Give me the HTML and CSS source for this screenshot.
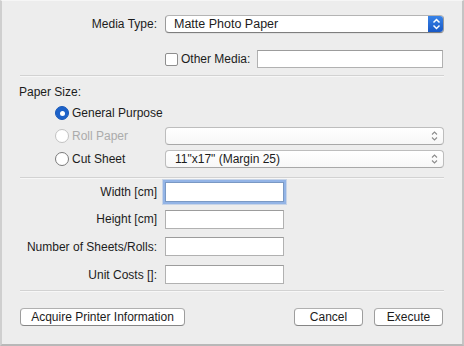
FILE: index.html
```html
<!DOCTYPE html>
<html>
<head>
<meta charset="utf-8">
<link rel="stylesheet" href="styles.css">
</head>
<body>
<div class="window">
  <div class="row media-row">
    <div class="label">Media Type:</div>
    <div class="popup primary">
      <span class="popup-text">Matte Photo Paper</span>
      <span class="stepper blue">
        <svg width="9" height="12" viewBox="0 0 9 12"><path d="M1.5 4.5 L4.5 1.5 L7.5 4.5 M1.5 7.5 L4.5 10.5 L7.5 7.5" fill="none" stroke="#fff" stroke-width="1.5"/></svg>
      </span>
    </div>
  </div>
  <div class="row other-row">
    <div class="label"></div>
    <label class="check"><span class="box"></span>Other Media:</label>
    <div class="field other-field"></div>
  </div>
  <div class="sep sep1"></div>
  <div class="section-title">Paper Size:</div>
  <div class="radio-row r1">
    <span class="radio on"></span><span class="rtext">General Purpose</span>
  </div>
  <div class="radio-row r2">
    <div class="radio-part"><span class="radio disabled"></span><span class="rtext dis">Roll Paper</span></div>
    <div class="popup plain">
      <span class="popup-text"></span>
      <span class="stepper gray"><svg width="9" height="12" viewBox="0 0 9 12"><path d="M2 4.5 L4.5 2 L7 4.5 M2 7.5 L4.5 10 L7 7.5" fill="none" stroke="#8c8c8c" stroke-width="1.1"/></svg></span>
    </div>
  </div>
  <div class="radio-row r3">
    <div class="radio-part"><span class="radio"></span><span class="rtext">Cut Sheet</span></div>
    <div class="popup plain">
      <span class="popup-text">11"x17" (Margin 25)</span>
      <span class="stepper gray"><svg width="9" height="12" viewBox="0 0 9 12"><path d="M2 4.5 L4.5 2 L7 4.5 M2 7.5 L4.5 10 L7 7.5" fill="none" stroke="#8c8c8c" stroke-width="1.1"/></svg></span>
    </div>
  </div>
  <div class="sep sep2"></div>
  <div class="form">
    <div class="frow"><div class="label">Width [cm]</div><div class="field small focus"></div></div>
    <div class="frow"><div class="label">Height [cm]</div><div class="field small"></div></div>
    <div class="frow"><div class="label">Number of Sheets/Rolls:</div><div class="field small"></div></div>
    <div class="frow"><div class="label">Unit Costs []:</div><div class="field small"></div></div>
  </div>
  <div class="sep sep3"></div>
  <div class="buttons">
    <div class="btn acquire">Acquire Printer Information</div>
    <div class="spacer"></div>
    <div class="btn cancel">Cancel</div>
    <div class="btn execute">Execute</div>
  </div>
</div>
</body>
</html>
```
FILE: styles.css
```css
html, body {
  margin: 0;
  padding: 0;
  background: #ececec;
}
body {
  font-family: "Liberation Sans", Arial, sans-serif;
  font-size: 12px;
  color: #1c1c1c;
}
.window {
  width: 464px;
  height: 346px;
  box-sizing: border-box;
  background: #ededed;
  border-left: 2px solid #cfcfcf;
  border-right: 2px solid #c4c4c4;
  border-bottom: 2px solid #b8b8b8;
  border-top: 1px solid #f6f6f6;
  padding: 0 18px 0 16px;
  display: flex;
  flex-direction: column;
}
.row {
  display: flex;
  align-items: center;
}
.label {
  width: 139px;
  flex: none;
  text-align: right;
  margin-right: 8px;
  white-space: nowrap;
}
.media-row {
  margin-top: 14px;
  height: 18px;
}
.popup {
  flex: 1;
  height: 18px;
  box-sizing: border-box;
  border: 1px solid #a9a9a9;
  border-radius: 4px;
  display: flex;
  align-items: center;
  background: #fff;
  overflow: hidden;
}
.popup.primary {
  border-color: #9a9a9a;
  border-top-color: #b4b4b4;
  border-bottom-color: #7e7e7e;
  box-shadow: 0 0.5px 0 rgba(0,0,0,0.1);
}
.popup-text {
  flex: 1;
  padding-left: 8px;
  white-space: nowrap;
}
.primary .popup-text {
  font-size: 12.5px;
}
.stepper {
  width: 15px;
  height: 100%;
  display: flex;
  align-items: center;
  justify-content: center;
}
.stepper.blue {
  background: linear-gradient(#3a86ea, #1656c4);
  margin-right: -1px;
  height: 18px;
  width: 16px;
  border-radius: 0 4px 4px 0;
}
.stepper.gray {
  width: 18px;
}
.popup.plain {
  background: linear-gradient(#ffffff, #f7f7f7);
  border-color: #bdbdbd;
  border-bottom-color: #a8a8a8;
  height: 18px;
}
.popup.plain .popup-text {
  padding-left: 9px;
}
.other-row {
  margin-top: 17px;
  height: 18px;
}
.check {
  display: flex;
  align-items: center;
  white-space: nowrap;
}
.box {
  width: 11px;
  height: 11px;
  border: 1px solid #8e8e8e;
  border-radius: 2px;
  background: #fff;
  margin-right: 3px;
  box-sizing: content-box;
}
.field {
  height: 18px;
  box-sizing: border-box;
  background: #fff;
  border: 1px solid #b1b1b1;
  border-top-color: #9c9c9c;
}
.other-field {
  margin-left: 7px;
  flex: 1;
  margin-right: 1px;
}
.sep {
  height: 1px;
  background: #d2d2d2;
  border-bottom: 1px solid #f7f7f7;
  margin-left: 2px;
}
.sep1 {
  margin-top: 7px;
}
.section-title {
  margin-top: 8px;
  margin-left: 1px;
  line-height: 14px;
}
.radio-row {
  display: flex;
  align-items: center;
  height: 18px;
}
.r1 {
  margin-top: 5px;
  padding-left: 37px;
}
.r2 {
  margin-top: 5px;
}
.r3 {
  margin-top: 5px;
}
.radio-part {
  width: 147px;
  flex: none;
  display: flex;
  align-items: center;
  padding-left: 37px;
  box-sizing: border-box;
}
.radio {
  width: 12px;
  height: 12px;
  border-radius: 50%;
  border: 1px solid #7a7a7a;
  background: #fff;
  margin-right: 3px;
  flex: none;
  box-sizing: content-box;
  position: relative;
}
.radio.on {
  background: #1d62c9;
  border-color: #1858b8;
}
.radio.on::after {
  content: "";
  position: absolute;
  left: 3.5px;
  top: 3.5px;
  width: 5px;
  height: 5px;
  border-radius: 50%;
  background: #fff;
}
.radio.disabled {
  border-color: #c2c2c2;
}
.rtext {
  white-space: nowrap;
}
.rtext.dis {
  color: #ababab;
}
.sep2 {
  margin-top: 9px;
}
.form {
  margin-top: 3px;
  display: flex;
  flex-direction: column;
  gap: 8.7px;
}
.frow {
  display: flex;
  align-items: center;
  height: 19px;
}
.field.small {
  width: 119px;
  height: 19px;
}
.field.focus {
  border-color: #7a99c4;
  box-shadow: 0 0 0 2px #93b4e6, 0 0 0 3px rgba(130,165,220,0.35);
  height: 20px;
}
.sep3 {
  margin-top: 6px;
}
.buttons {
  margin-top: 16px;
  display: flex;
  align-items: center;
  padding-left: 2px;
}
.btn {
  height: 18px;
  box-sizing: border-box;
  border: 1px solid #9d9d9d;
  border-top-color: #b0b0b0;
  border-bottom-color: #858585;
  border-radius: 4px;
  background: #fff;
  display: flex;
  align-items: center;
  justify-content: center;
  white-space: nowrap;
}
.acquire {
  width: 165px;
}
.spacer {
  flex: 1;
}
.cancel {
  width: 69px;
  margin-right: 11px;
}
.execute {
  width: 69px;
  margin-right: 1px;
}
```
